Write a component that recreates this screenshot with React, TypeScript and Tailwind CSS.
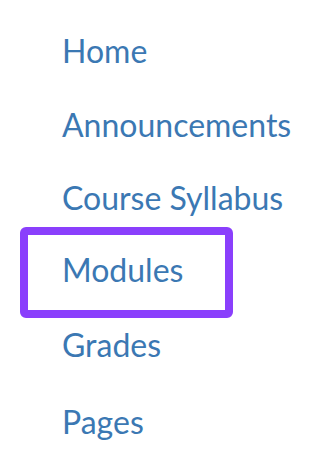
import React from 'react';

const links = [
    { label: 'Home', h: 'h-[74px]' },
    { label: 'Announcements', h: 'h-[73px]' },
    { label: 'Course Syllabus', h: 'h-[72px]' },
    { label: 'Modules', h: 'h-[75px]', active: true },
    { label: 'Grades', h: 'h-[77px]' },
    { label: 'Pages', h: 'h-[73px]' },
];

export default function App() {
    return (
        <div className="w-[315px] h-[462px] bg-white overflow-hidden" style={{ fontFamily: 'Lato, "Open Sans", sans-serif' }}>
            <ul className="pt-[31px] pl-[20px]">
                {links.map((link) => (
                    <li key={link.label} className={`${link.h} flex items-start`}>
                        <a
                            href="#"
                            className="relative block w-[213px] pl-[42px] text-[32px] leading-[40px] text-[#3b78b3] whitespace-nowrap"
                        >
                            {/* foco visible del enlace activo */}
                            {link.active && (
                                <span className="absolute left-0 -top-[23px] w-[213px] h-[91px] rounded-[6px] border-[8px] border-[#8a3ffc]" />
                            )}
                            {link.label}
                        </a>
                    </li>
                ))}
            </ul>
        </div>
    );
}
